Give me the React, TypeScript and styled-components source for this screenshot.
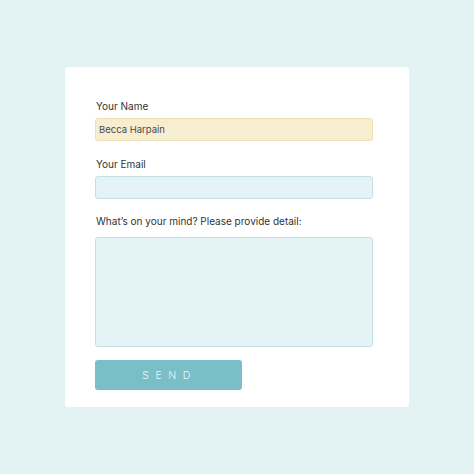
import styled, { createGlobalStyle } from 'styled-components';

const GlobalStyle = createGlobalStyle`
  html, body {
    margin: 0;
    padding: 0;
    background: #e3f3f4;
  }
  * {
    box-sizing: border-box;
  }
`;

export const Page = styled.div`
  width: 474px;
  height: 474px;
  padding: 67px 0 0 65px;
  font-family: Inter, 'Open Sans', 'Liberation Sans', sans-serif;
`;

export const Card = styled.form`
  width: 344px;
  height: 340px;
  background: #ffffff;
  border-radius: 3px;
  padding: 32px 36px 0 30px;
  display: flex;
  flex-direction: column;
`;

export const Label = styled.label<{ $gap?: number; $top?: number }>`
  display: block;
  height: 14px;
  line-height: 14px;
  font-size: 10px;
  color: #333333;
  padding-left: 1px;
  margin-top: ${(p) => p.$top ?? 0}px;
  margin-bottom: ${(p) => p.$gap ?? 5}px;
`;

export const Input = styled.input<{ $variant?: 'filled' | 'empty' }>`
  display: block;
  width: 278px;
  height: 23px;
  border-radius: 3px;
  border: 1px solid ${(p) => (p.$variant === 'filled' ? '#eedfb5' : '#c2e0e6')};
  background: ${(p) => (p.$variant === 'filled' ? '#f7edd1' : '#e4f3f5')};
  padding: 0 3px;
  font-family: inherit;
  font-size: 9.5px;
  color: #4a4a4a;
  outline: none;
`;

export const TextArea = styled.textarea`
  display: block;
  width: 278px;
  height: 110px;
  border-radius: 3px;
  border: 1px solid #c2e0e6;
  background: #e4f3f5;
  resize: none;
  outline: none;
  font-family: inherit;
`;

export const SendButton = styled.button`
  margin-top: 13px;
  width: 147px;
  height: 30px;
  border: none;
  border-radius: 3px;
  background: #7abfc7;
  color: #e6f6f7;
  font-family: inherit;
  font-size: 10.5px;
  font-weight: 300;
  letter-spacing: 6.5px;
  padding-left: 8px;
  cursor: pointer;
`;

const App = () => {
  return (
    <>
      <GlobalStyle />
      <Page>
        <Card onSubmit={(e) => e.preventDefault()}>
          <Label>Your Name</Label>
          <Input $variant='filled' defaultValue='Becca Harpain' />
          <Label $top={16}>Your Email</Label>
          <Input $variant='empty' />
          <Label $top={15} $gap={9}>
            What’s on your mind? Please provide detail:
          </Label>
          <TextArea />
          <SendButton type='submit'>SEND</SendButton>
        </Card>
      </Page>
    </>
  );
};

export default App;
